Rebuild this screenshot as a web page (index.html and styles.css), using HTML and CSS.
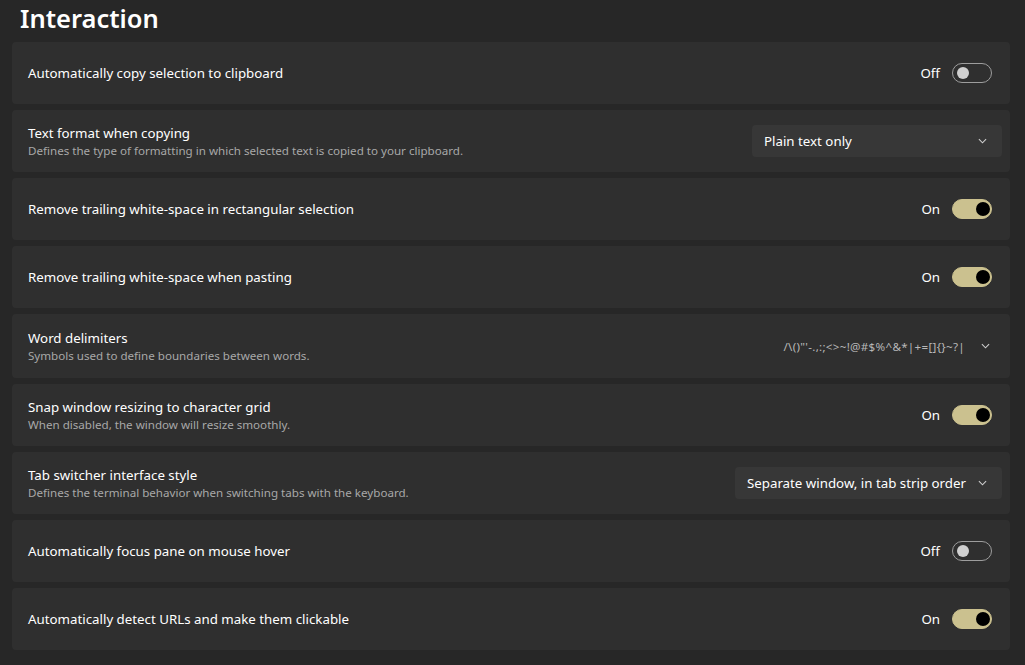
FILE: index.html
```html
<!DOCTYPE html>
<html lang="en">
<head>
    <meta charset="UTF-8">
    <meta name="viewport" content="width=device-width, initial-scale=1.0">
    <title>Interaction</title>
    <link rel="stylesheet" href="styles.css">
</head>
<body>
    <div class="page">
        <h1 class="page-title">Interaction</h1>

        <div class="settings-list">
            <div class="setting">
                <div class="setting-text">
                    <div class="setting-name">Automatically copy selection to clipboard</div>
                </div>
                <div class="toggle-wrap">
                    <span class="toggle-label">Off</span>
                    <span class="toggle"></span>
                </div>
            </div>

            <div class="setting">
                <div class="setting-text">
                    <div class="setting-name">Text format when copying</div>
                    <div class="setting-desc">Defines the type of formatting in which selected text is copied to your clipboard.</div>
                </div>
                <div class="dropdown dropdown-wide">
                    <span>Plain text only</span>
                    <svg class="chevron" viewBox="0 0 10 6"><polyline points="1,1 5,5 9,1"></polyline></svg>
                </div>
            </div>

            <div class="setting">
                <div class="setting-text">
                    <div class="setting-name">Remove trailing white-space in rectangular selection</div>
                </div>
                <div class="toggle-wrap">
                    <span class="toggle-label">On</span>
                    <span class="toggle on"></span>
                </div>
            </div>

            <div class="setting">
                <div class="setting-text">
                    <div class="setting-name">Remove trailing white-space when pasting</div>
                </div>
                <div class="toggle-wrap">
                    <span class="toggle-label">On</span>
                    <span class="toggle on"></span>
                </div>
            </div>

            <div class="setting setting-tall">
                <div class="setting-text">
                    <div class="setting-name">Word delimiters</div>
                    <div class="setting-desc">Symbols used to define boundaries between words.</div>
                </div>
                <div class="expander">
                    <span class="expander-value">/\()"'-.,:;&lt;&gt;~!@#$%^&amp;*|+=[]{}~?|</span>
                    <svg class="chevron" viewBox="0 0 10 6"><polyline points="1,1 5,5 9,1"></polyline></svg>
                </div>
            </div>

            <div class="setting">
                <div class="setting-text">
                    <div class="setting-name">Snap window resizing to character grid</div>
                    <div class="setting-desc">When disabled, the window will resize smoothly.</div>
                </div>
                <div class="toggle-wrap">
                    <span class="toggle-label">On</span>
                    <span class="toggle on"></span>
                </div>
            </div>

            <div class="setting">
                <div class="setting-text">
                    <div class="setting-name">Tab switcher interface style</div>
                    <div class="setting-desc">Defines the terminal behavior when switching tabs with the keyboard.</div>
                </div>
                <div class="dropdown">
                    <span>Separate window, in tab strip order</span>
                    <svg class="chevron" viewBox="0 0 10 6"><polyline points="1,1 5,5 9,1"></polyline></svg>
                </div>
            </div>

            <div class="setting">
                <div class="setting-text">
                    <div class="setting-name">Automatically focus pane on mouse hover</div>
                </div>
                <div class="toggle-wrap">
                    <span class="toggle-label">Off</span>
                    <span class="toggle"></span>
                </div>
            </div>

            <div class="setting">
                <div class="setting-text">
                    <div class="setting-name">Automatically detect URLs and make them clickable</div>
                </div>
                <div class="toggle-wrap">
                    <span class="toggle-label">On</span>
                    <span class="toggle on"></span>
                </div>
            </div>
        </div>
    </div>
</body>
</html>
```

FILE: styles.css
```css
:root {
    --background: #272727;
    --card: #2f2f2f;
    --control: #373737;
    --foreground: #ffffff;
    --muted: #a8a8a8;
    --accent: #cbc18f;
}

* {
    margin: 0;
    padding: 0;
    box-sizing: border-box;
    font-family: "Noto Sans", "Open Sans", sans-serif;
}

body {
    background-color: var(--background);
    color: var(--foreground);
    height: 100vh;
    overflow: hidden;
}

.page {
    padding: 0 15px 0 12px;
}

.page-title {
    height: 42px;
    padding-left: 8px;
    font-size: 25.5px;
    font-weight: 600;
    line-height: 36px;
}

.settings-list {
    display: flex;
    flex-direction: column;
    gap: 6px;
}

.setting {
    display: flex;
    align-items: center;
    height: 62px;
    padding: 0 8px 0 16px;
    background: var(--card);
    border-radius: 4px;
}

.setting-tall {
    height: 64px;
}

.setting-text {
    flex: 1;
    min-width: 0;
}

.setting-name {
    font-size: 13.3px;
    line-height: 19px;
}

.setting-desc {
    font-size: 11.6px;
    line-height: 16px;
    color: var(--muted);
}

/* toggle switch */
.toggle-wrap {
    display: flex;
    align-items: center;
    gap: 12px;
    margin-right: 10px;
}

.toggle-label {
    font-size: 13.3px;
}

.toggle {
    position: relative;
    width: 40px;
    height: 20px;
    border: 1px solid #9d9d9d;
    border-radius: 10px;
}

.toggle::after {
    content: "";
    position: absolute;
    left: 4px;
    top: 3px;
    width: 12px;
    height: 12px;
    border-radius: 50%;
    background: #d0d0d0;
}

.toggle.on {
    background: var(--accent);
    border-color: var(--accent);
}

.toggle.on::after {
    left: 23px;
    top: 2px;
    width: 14px;
    height: 14px;
    background: #000000;
}

/* dropdowns */
.dropdown {
    display: flex;
    align-items: center;
    justify-content: space-between;
    gap: 12px;
    height: 32px;
    padding: 0 15px 0 12px;
    background: var(--control);
    border-radius: 4px;
    font-size: 13.3px;
}

.dropdown-wide {
    width: 250px;
}

.chevron {
    width: 9px;
    height: 6px;
    fill: none;
    stroke: #cfcfcf;
    stroke-width: 1.2;
}

.expander {
    display: flex;
    align-items: center;
    gap: 16px;
    margin-right: 12px;
}

.expander-value {
    font-size: 11.6px;
    letter-spacing: 0.3px;
    color: #b8b8b8;
}
```
